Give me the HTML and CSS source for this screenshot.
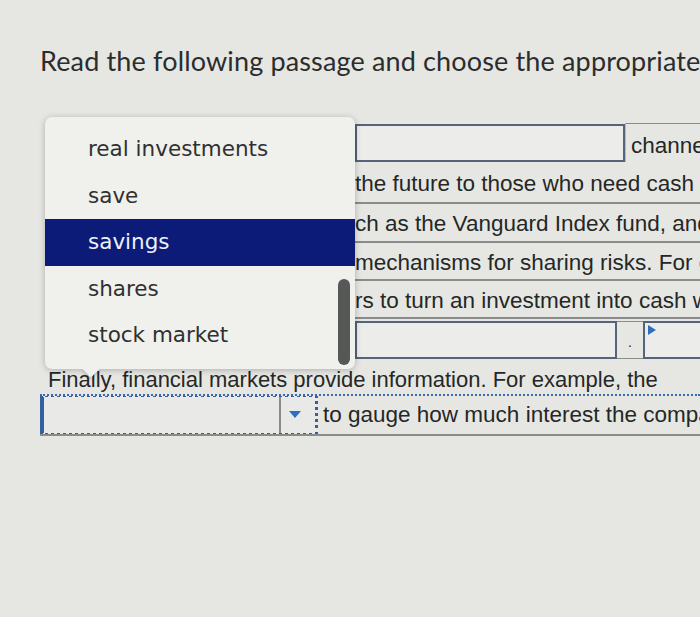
FILE: index.html
```html
<!DOCTYPE html>
<html lang="en">
<head>
  <meta charset="UTF-8" />
  <meta name="viewport" content="width=device-width, initial-scale=1.0"/>
  <title>Financial markets passage</title>
  <link rel="stylesheet" href="styles.css">
</head>
<body>
  <h1 class="prompt">Read the following passage and choose the appropriate</h1>

  <div class="passage">
    <div class="line line-top shifted">
      <span class="pick"></span>
      <span class="words">channel</span>
    </div>
    <div class="line ruled shifted">the future to those who need cash to</div>
    <div class="line ruled shifted">ch as the Vanguard Index fund, and</div>
    <div class="line ruled shifted">mechanisms for sharing risks. For e</div>
    <div class="line ruled shifted">rs to turn an investment into cash w</div>
    <div class="line line-picks shifted">
      <span class="pick pick-short"></span>
      <span class="stop">.</span>
      <span class="pick pick-flag"></span>
    </div>
    <div class="line line-plain">Finally, financial markets provide information. For example, the</div>
    <div class="line line-focus">
      <span class="pick pick-focus">
        <span class="pick-blank"></span>
        <span class="pick-arrow"></span>
      </span>
      <span class="words">to gauge how much interest the compa</span>
    </div>

    <div class="menu">
      <div class="menu-item">real investments</div>
      <div class="menu-item">save</div>
      <div class="menu-item selected">savings</div>
      <div class="menu-item">shares</div>
      <div class="menu-item">stock market</div>
      <div class="menu-scroll"></div>
      <div class="menu-tip"></div>
    </div>
  </div>
</body>
</html>
```

FILE: styles.css
```css
* {
  box-sizing: border-box;
  margin: 0;
  padding: 0;
}
body {
  background-color: #e6e7e3;
  color: #262828;
  height: 617px;
  overflow: hidden;
  white-space: nowrap;
}
.prompt {
  font-family: 'Lato', 'Open Sans', sans-serif;
  font-weight: 400;
  font-size: 27px;
  letter-spacing: 0.15px;
  line-height: 30px;
  color: #2b2d2d;
  margin: 46px 0 0 40px;
}
.passage {
  position: relative;
  margin-top: 41px;
  font-family: 'Liberation Sans', Arial, sans-serif;
  font-size: 22.5px;
  color: #252727;
}
.line {
  display: flex;
  align-items: center;
  overflow: hidden;
}
.shifted {
  margin-left: 355px;
}
.line-top {
  height: 45px;
  align-items: flex-end;
}
.line-top .words {
  align-self: stretch;
  display: flex;
  align-items: center;
  padding: 5px 0 0 5px;
  border-top: 1px solid #8a8c8c;
  border-left: 1px solid #b9bbb9;
  margin-top: 6px;
  flex: 1;
}
.ruled {
  height: 38px;
  border-bottom: 2px solid #8a8c8c;
  padding-top: 3px;
}
.ruled:nth-child(2) {
  height: 42px;
}
.ruled:nth-child(3) {
  height: 39px;
}
.pick {
  display: inline-block;
  height: 38px;
  border: 2px solid #55647a;
  background-color: #ecedea;
  flex: none;
}
.line-top .pick {
  width: 270px;
}
.line-picks {
  height: 40px;
  padding-top: 2px;
}
.pick-short {
  width: 262px;
}
.stop {
  width: 26px;
  height: 38px;
  border-top: 1px solid #8a8c8c;
  border-bottom: 1px solid #8a8c8c;
  font-size: 14px;
  display: flex;
  justify-content: center;
  align-items: center;
  padding-top: 4px;
}
.pick-flag {
  position: relative;
  flex: 1;
  border-right: none;
}
.pick-flag::before {
  content: '';
  position: absolute;
  top: 2px;
  left: 3px;
  border-left: 8px solid #2c6fc2;
  border-top: 5px solid transparent;
  border-bottom: 5px solid transparent;
}
.line-plain {
  height: 35px;
  padding: 6px 0 0 48px;
  font-size: 22px;
}
.line-focus {
  height: 42px;
  margin-left: 40px;
  border-top: 2px dotted #3b67ad;
  border-bottom: 2px solid #8a8c8c;
}
.pick-focus {
  display: flex;
  width: 278px;
  height: 42px;
  margin-top: -2px;
  margin-bottom: -2px;
  border: 3px dotted #35609f;
  border-left-style: solid;
  border-left-width: 4px;
  background-color: #e9eae7;
}
.pick-blank {
  width: 237px;
  border-right: 2px solid #8a8c8c;
}
.pick-arrow {
  flex: 1;
  position: relative;
}
.pick-arrow::before {
  content: '';
  position: absolute;
  top: 14px;
  left: 8px;
  border-top: 7px solid #2c6fc2;
  border-left: 6px solid transparent;
  border-right: 6px solid transparent;
}
.line-focus .words {
  padding-left: 5px;
}
.menu {
  position: absolute;
  left: 45px;
  top: 0;
  width: 310px;
  height: 252px;
  padding-top: 9px;
  background-color: #f0f0ed;
  border-radius: 7px;
  box-shadow: 0 1px 6px rgba(0, 0, 0, 0.25);
  font-family: 'DejaVu Sans', Verdana, sans-serif;
  font-size: 21.5px;
  color: #2f3131;
}
.menu-item {
  height: 46.5px;
  line-height: 46px;
  padding-left: 43px;
}
.menu-item.selected {
  background-color: #0d1b78;
  color: #eef0f8;
}
.menu-scroll {
  position: absolute;
  right: 5px;
  top: 162px;
  width: 12px;
  height: 86px;
  background-color: #565857;
  border-radius: 6px;
}
.menu-tip {
  position: absolute;
  left: 40px;
  bottom: -6px;
  width: 12px;
  height: 12px;
  background-color: #f0f0ed;
  transform: rotate(45deg);
  box-shadow: 2px 2px 3px rgba(0, 0, 0, 0.15);
}
```
